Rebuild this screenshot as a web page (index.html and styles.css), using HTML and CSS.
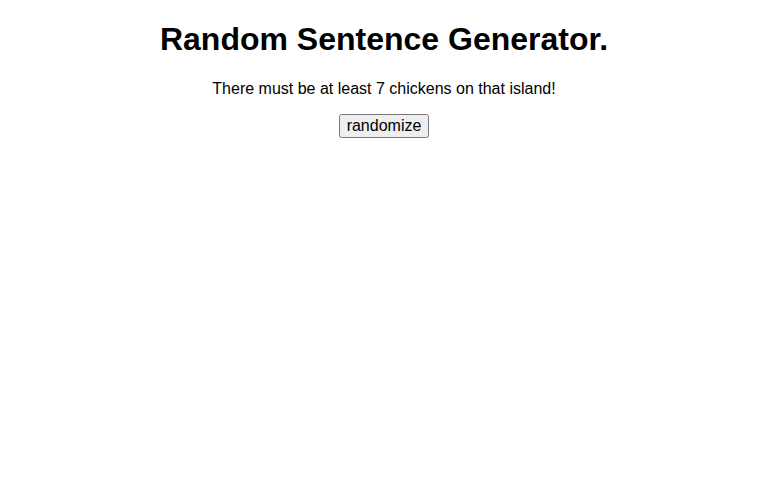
FILE: index.html
```html
<!DOCTYPE html>
<html lang="en">
<head>
<meta charset="utf-8">
<title>Random Sentence Generator</title>
<link rel="stylesheet" href="styles.css">
</head>
<body>
  <main class="generator">
    <h1 class="generator__title">Random Sentence Generator.</h1>
    <p class="generator__sentence">There must be at least 7 chickens on that island!</p>
    <button class="generator__button" type="button">randomize</button>
  </main>
</body>
</html>
```

FILE: styles.css
```css
body {
  margin: 0;
  background: #ffffff;
  color: #000000;
  font-family: "Liberation Sans", Arial, sans-serif;
}

.generator {
  display: flex;
  flex-direction: column;
  align-items: center;
  text-align: center;
}

.generator__title {
  font-size: 32px;
  font-weight: bold;
  margin: 21px 0 22px;
}

.generator__sentence {
  font-size: 16px;
  margin: 0 0 16px;
}

.generator__button {
  font-family: "Liberation Sans", Arial, sans-serif;
  font-size: 16px;
}
```
